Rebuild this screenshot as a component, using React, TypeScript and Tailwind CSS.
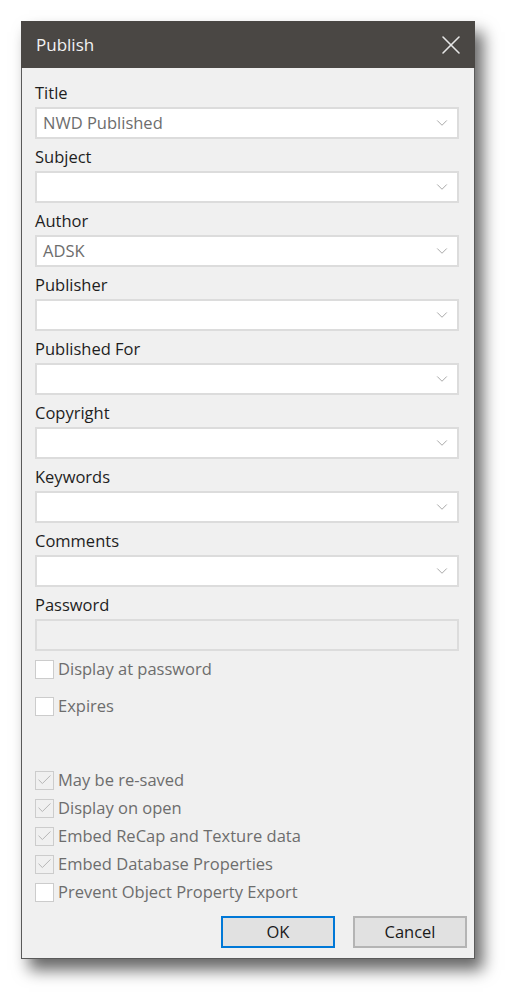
import { X, ChevronDown, Check } from 'lucide-react';

const fields = [
  { label: 'Title', value: 'NWD Published' },
  { label: 'Subject', value: '' },
  { label: 'Author', value: 'ADSK' },
  { label: 'Publisher', value: '' },
  { label: 'Published For', value: '' },
  { label: 'Copyright', value: '' },
  { label: 'Keywords', value: '' },
  { label: 'Comments', value: '' },
];

const options = [
  { label: 'May be re-saved', checked: true },
  { label: 'Display on open', checked: true },
  { label: 'Embed ReCap and Texture data', checked: true },
  { label: 'Embed Database Properties', checked: true },
  { label: 'Prevent Object Property Export', checked: false },
];

function Combo({ value }: { value: string }) {
  return (
    <div className="flex h-[32px] items-center justify-between border-2 border-[#dcdcdc] bg-white pl-[6px] pr-[6px]">
      <span className="text-[#6d6d6d]">{value}</span>
      <ChevronDown className="h-[18px] w-[18px] text-[#a6a6a6]" strokeWidth={1.3} />
    </div>
  );
}

function CheckRow({ label, checked }: { label: string; checked: boolean }) {
  return (
    <div className="flex h-[28px] items-center gap-[4px]">
      <div
        className={
          checked
            ? 'flex h-[19px] w-[19px] shrink-0 items-center justify-center border border-[#cccccc] bg-[#f0f0f0]'
            : 'flex h-[19px] w-[19px] shrink-0 items-center justify-center border border-[#cccccc] bg-white'
        }
      >
        {checked && <Check className="h-[18px] w-[18px] text-[#b0b0b0]" strokeWidth={1.3} />}
      </div>
      <span className="text-[#6d6d6d]">{label}</span>
    </div>
  );
}

export default function App() {
  return (
    <div
      className="min-h-[1003px] bg-white pl-[21px] pt-[21px] text-[16.5px]"
      style={{ fontFamily: '"Open Sans", "Noto Sans", sans-serif' }}
    >
      <div className="flex h-[938px] w-[454px] flex-col shadow-[8px_11px_15px_rgba(0,0,0,0.6)]">
        <div className="flex h-[47px] items-center justify-between bg-[#4a4744] pl-[15px] pr-[8px]">
          <span className="text-[17px] text-[#f2f2f2]">Publish</span>
          <X className="h-[32px] w-[32px] text-[#e6e6e6]" strokeWidth={1.2} />
        </div>

        <div className="flex flex-1 flex-col border-x border-b border-[#5a5a5a] bg-[#f0f0f0] pl-[13px] pr-[15px] pt-[14px]">
          {fields.map((f) => (
            <div key={f.label} className="mb-[7px]">
              <div className="mb-[3px] h-[22px] leading-[22px] text-[#1e1e1e]">{f.label}</div>
              <Combo value={f.value} />
            </div>
          ))}

          <div>
            <div className="mb-[3px] h-[22px] leading-[22px] text-[#1e1e1e]">Password</div>
            <div className="h-[32px] border-2 border-[#dcdcdc] bg-[#f0f0f0]" />
          </div>

          <div className="mt-[4px] flex flex-col gap-[9px]">
            <CheckRow label="Display at password" checked={false} />
            <CheckRow label="Expires" checked={false} />
          </div>

          <div className="mt-[46px] flex flex-col">
            {options.map((o) => (
              <CheckRow key={o.label} label={o.label} checked={o.checked} />
            ))}
          </div>

          <div className="-mr-[8px] mt-[10px] flex justify-end gap-[18px]">
            <button className="h-[32px] w-[114px] border-2 border-[#0078d7] bg-[#e1e1e1] text-[#1a1a1a]">
              OK
            </button>
            <button className="h-[32px] w-[114px] border-2 border-[#b4b4b4] bg-[#e1e1e1] text-[#1a1a1a]">
              Cancel
            </button>
          </div>
        </div>
      </div>
    </div>
  );
}
